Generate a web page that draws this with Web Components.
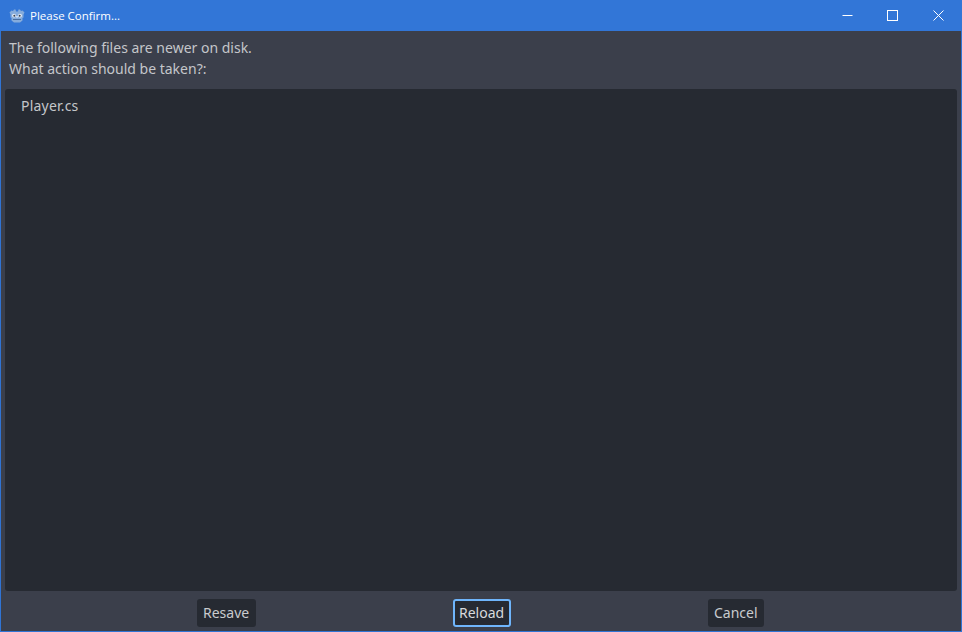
<!DOCTYPE html>
<html>
<head>
<meta charset="utf-8">
<title>Please Confirm...</title>
<style>
  html, body { margin: 0; height: 100%; background: #3b3f4b; }
</style>
</head>
<body>
<confirm-window title-text="Please Confirm...">
  <file-list>
    <file-item>Player.cs</file-item>
  </file-list>
  <dialog-button slot="buttons" style="width:59px">Resave</dialog-button>
  <dialog-button slot="buttons" style="width:58px" focused>Reload</dialog-button>
  <dialog-button slot="buttons" style="width:56px">Cancel</dialog-button>
</confirm-window>
<script>
class DialogButton extends HTMLElement {
  constructor() {
    super();
    this.attachShadow({ mode: 'open' });
    this.shadowRoot.innerHTML = `
      <style>
        :host {
          display: block;
          box-sizing: border-box;
          height: 28px;
          padding-left: 6px;
          background: #262a32;
          border-radius: 3px;
          color: #c9cbce;
          font: 14px/28px "Noto Sans", sans-serif;
          white-space: nowrap;
        }
        :host([focused]) {
          box-shadow: inset 0 0 0 2px #6fb5fb;
          color: #d8dadc;
        }
      </style>
      <slot></slot>
    `;
  }
}

class FileItem extends HTMLElement {
  constructor() {
    super();
    this.attachShadow({ mode: 'open' });
    this.shadowRoot.innerHTML = `
      <style>
        :host {
          display: block;
          padding-left: 16px;
          color: #c4c6ca;
          font: 14px/19px "Noto Sans", sans-serif;
          letter-spacing: .2px;
        }
      </style>
      <slot></slot>
    `;
  }
}

class FileList extends HTMLElement {
  constructor() {
    super();
    this.attachShadow({ mode: 'open' });
    this.shadowRoot.innerHTML = `
      <style>
        :host {
          display: block;
          flex: 1;
          min-height: 0;
          padding-top: 7px;
          background: #262a32;
          border-radius: 3px;
        }
      </style>
      <slot></slot>
    `;
  }
}

class ConfirmWindow extends HTMLElement {
  constructor() {
    super();
    this.attachShadow({ mode: 'open' });
    this.shadowRoot.innerHTML = `
      <style>
        :host {
          display: flex;
          flex-direction: column;
          box-sizing: border-box;
          width: 962px;
          height: 632px;
          border: 1px solid #3074d4;
          border-top: 0;
          background: #3b3f4b;
        }
        .titlebar {
          display: flex;
          align-items: center;
          flex: none;
          height: 31px;
          margin: 0 -1px;
          background: #3276d7;
          color: #fff;
          font: 11.5px "Open Sans", "Noto Sans", sans-serif;
        }
        .logo { width: 16px; height: 16px; margin: 0 5px 0 9px; }
        .name { flex: 1; }
        .ctrl {
          display: flex;
          align-items: center;
          justify-content: center;
          width: 46px;
          height: 31px;
        }
        .ctrl.min { width: 44px; }
        .ctrl.close { width: 47px; }
        .ctrl svg { display: block; width: 11px; height: 11px; }
        .message {
          flex: none;
          height: 58px;
          padding: 6px 0 0 8px;
          box-sizing: border-box;
          color: #c4c6ca;
          font: 14px/21px "Noto Sans", sans-serif;
        }
        .panel {
          display: flex;
          flex: 1;
          flex-direction: column;
          min-height: 0;
          margin: 0 4px;
        }
        .buttons {
          display: flex;
          flex: none;
          gap: 197px;
          box-sizing: border-box;
          height: 40px;
          padding: 8px 0 0 192px;
          margin: 0 4px;
        }
      </style>
      <div class="titlebar">
        <svg class="logo" viewBox="0 0 16 16">
          <path fill="#86acdc" d="M5 1.500h1.500L7 3.500h2l.5-2H11l1 1.500 1.500-.5L15.500 4.500 14.500 6.500v3l-1 .5v2.500L11 14.500H5L2.500 12.500V10l-1-.5v-3L.5 4.500 2.500 2.500 4 3z"/>
          <circle cx="5" cy="7.600" r="1.900" fill="#e8eff9"/>
          <circle cx="11" cy="7.600" r="1.900" fill="#e8eff9"/>
          <circle cx="5.300" cy="7.800" r="1" fill="#3a4250"/>
          <circle cx="10.700" cy="7.800" r="1" fill="#3a4250"/>
          <rect x="7.300" y="8" width="1.400" height="1.600" fill="#e8eff9"/>
          <path fill="none" stroke="#4c6f9e" d="M4 11.500h8"/>
        </svg>
        <span class="name"></span>
        <div class="ctrl min"><svg viewBox="0 0 11 11"><path stroke="#fff" d="M0.500 5.500h10"/></svg></div>
        <div class="ctrl"><svg viewBox="0 0 11 11"><rect x=".5" y=".5" width="10" height="10" fill="none" stroke="#fff"/></svg></div>
        <div class="ctrl close"><svg viewBox="0 0 11 11"><path stroke="#fff" fill="none" d="M.5.500l10 10M10.500.500l-10 10"/></svg></div>
      </div>
      <div class="message">The following files are newer on disk.<br>What action should be taken?:</div>
      <div class="panel"><slot></slot></div>
      <div class="buttons"><slot name="buttons"></slot></div>
    `;
    this.shadowRoot.querySelector('.name').textContent = this.getAttribute('title-text');
  }
}

customElements.define('dialog-button', DialogButton);
customElements.define('file-item', FileItem);
customElements.define('file-list', FileList);
customElements.define('confirm-window', ConfirmWindow);
</script>
</body>
</html>
